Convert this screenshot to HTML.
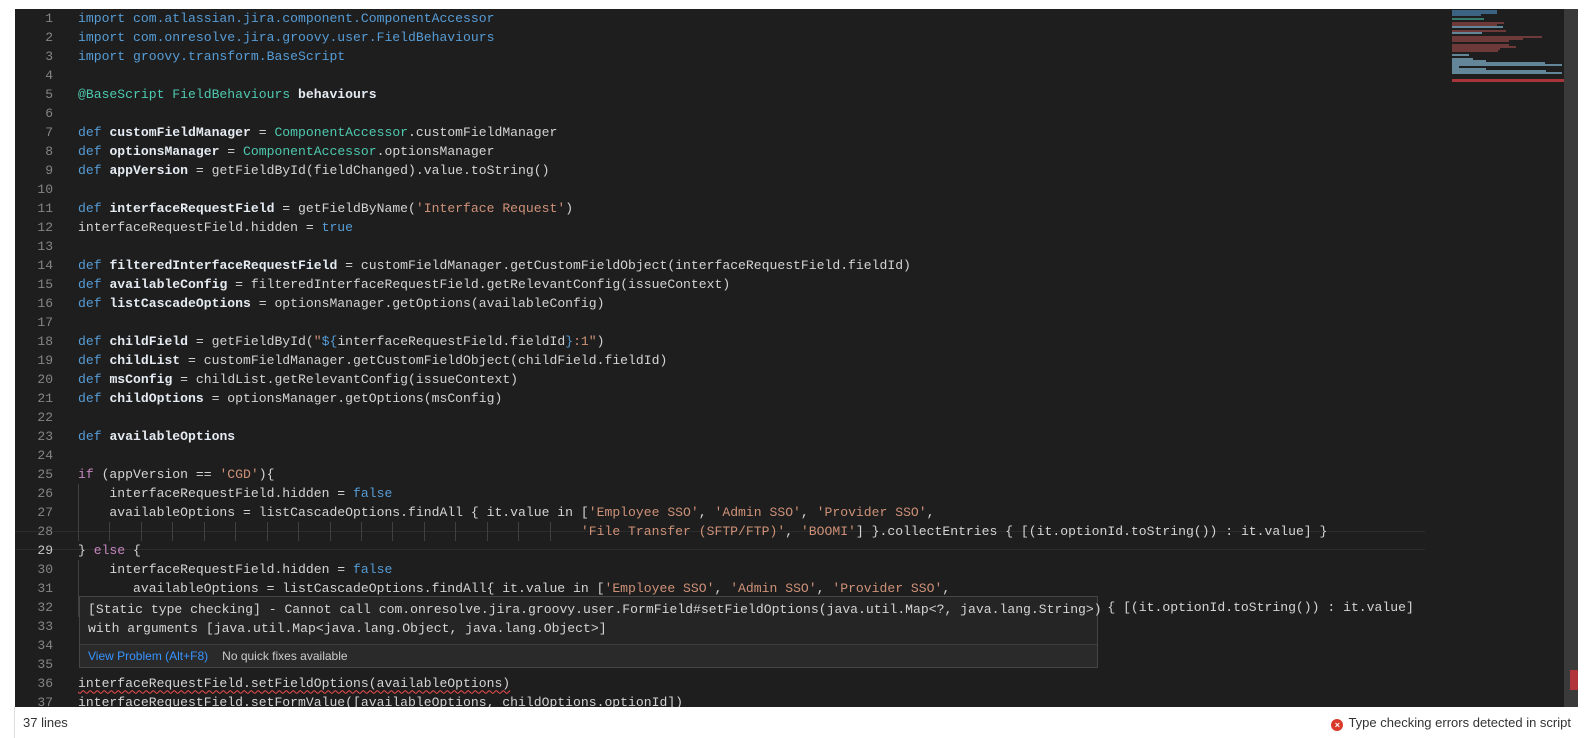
<!DOCTYPE html>
<html><head><meta charset="utf-8"><style>
body{margin:0;width:1590px;height:738px;background:#fff;position:relative;overflow:hidden;font-family:"Liberation Sans",sans-serif}
#ed{position:absolute;left:15px;top:9px;width:1549px;height:698px;background:#1e1e1e;overflow:hidden}
#sb{position:absolute;left:1564px;top:9px;width:14px;height:698px;background:#3a3a3a}
#sbm{position:absolute;left:1570px;top:670px;width:8px;height:20px;background:#b0343a}
.ln{position:absolute;left:0;width:38px;text-align:right;font:13px/19px "Liberation Mono",monospace;color:#858585}
.cd{position:absolute;left:63px;white-space:pre;font:13.1px/19px "Liberation Mono",monospace;color:#d4d4d4}
.k{color:#569cd6}.p{color:#c586c0}.t{color:#4ec9b0}.s{color:#ce9178}.v{color:#e4ebf2;font-weight:bold}
.cur{position:absolute;left:0;width:1410px;top:522px;height:17px;border-top:1px solid #2c2c2c;border-bottom:1px solid #2c2c2c}
.g{position:absolute;width:1px;background:#404040}
#hov{position:absolute;left:79px;top:596px;width:1017px;height:70px;background:#252526;border:1px solid #454545;font:13.1px/19px "Liberation Mono",monospace;color:#d4d4d4}
#hov .m{position:absolute;left:8px;top:3px;white-space:pre}
#hov .st{position:absolute;left:0;right:0;bottom:0;height:22px;border-top:1px solid #3c3c3c;background:#2a2a2b;font:12px/22px "Liberation Sans",sans-serif}
#bar{position:absolute;left:14px;top:707px;width:1564px;height:31px;border-left:1px solid #ddd;background:#fff;font-size:13px;color:#333}
.sq{text-decoration:underline wavy #f14c4c;text-decoration-thickness:1px;text-underline-offset:3px}
.mm{position:absolute;height:2px;opacity:.55}
</style></head><body>
<div id="ed">
<div class="cur"></div>
</div>
<div id="sb"></div><div id="sbm"></div>
<script>
var L=[
'<span class="k">import com.atlassian.jira.component.ComponentAccessor</span>',
'<span class="k">import com.onresolve.jira.groovy.user.FieldBehaviours</span>',
'<span class="k">import groovy.transform.BaseScript</span>',
'',
'<span class="t">@BaseScript FieldBehaviours</span> <span class="v">behaviours</span>',
'',
'<span class="k">def</span> <span class="v">customFieldManager</span> = <span class="t">ComponentAccessor</span>.customFieldManager',
'<span class="k">def</span> <span class="v">optionsManager</span> = <span class="t">ComponentAccessor</span>.optionsManager',
'<span class="k">def</span> <span class="v">appVersion</span> = getFieldById(fieldChanged).value.toString()',
'',
'<span class="k">def</span> <span class="v">interfaceRequestField</span> = getFieldByName(<span class="s">\'Interface Request\'</span>)',
'interfaceRequestField.hidden = <span class="k">true</span>',
'',
'<span class="k">def</span> <span class="v">filteredInterfaceRequestField</span> = customFieldManager.getCustomFieldObject(interfaceRequestField.fieldId)',
'<span class="k">def</span> <span class="v">availableConfig</span> = filteredInterfaceRequestField.getRelevantConfig(issueContext)',
'<span class="k">def</span> <span class="v">listCascadeOptions</span> = optionsManager.getOptions(availableConfig)',
'',
'<span class="k">def</span> <span class="v">childField</span> = getFieldById(<span class="s">"</span><span class="k">${</span>interfaceRequestField.fieldId<span class="k">}</span><span class="s">:1"</span>)',
'<span class="k">def</span> <span class="v">childList</span> = customFieldManager.getCustomFieldObject(childField.fieldId)',
'<span class="k">def</span> <span class="v">msConfig</span> = childList.getRelevantConfig(issueContext)',
'<span class="k">def</span> <span class="v">childOptions</span> = optionsManager.getOptions(msConfig)',
'',
'<span class="k">def</span> <span class="v">availableOptions</span>',
'',
'<span class="p">if</span> (appVersion == <span class="s">\'CGD\'</span>){',
'    interfaceRequestField.hidden = <span class="k">false</span>',
'    availableOptions = listCascadeOptions.findAll { it.value in [<span class="s">\'Employee SSO\'</span>, <span class="s">\'Admin SSO\'</span>, <span class="s">\'Provider SSO\'</span>,',
' '.repeat(64)+'<span class="s">\'File Transfer (SFTP/FTP)\'</span>, <span class="s">\'BOOMI\'</span>] }.collectEntries { [(it.optionId.toString()) : it.value] }',
'} <span class="p">else</span> {',
'    interfaceRequestField.hidden = <span class="k">false</span>',
'       availableOptions = listCascadeOptions.findAll{ it.value in [<span class="s">\'Employee SSO\'</span>, <span class="s">\'Admin SSO\'</span>, <span class="s">\'Provider SSO\'</span>,',
' '.repeat(77)+'<span class="s">\'File Transfer (SFTP/FTP)\'</span>, <span class="s">\'BOOMI\'</span>] }.collectEntries { [(it.optionId.toString()) : it.value]',
'}','','',
'<span class="sq">interfaceRequestField.setFieldOptions(availableOptions)</span>',
'interfaceRequestField.setFormValue([availableOptions, childOptions.optionId])'
];
var ed=document.getElementById('ed'),h='';
for(var i=0;i<L.length;i++){
 var y=i*19-0.5;
 h+='<div class="ln" style="top:'+y+'px;'+(i==28?'color:#c6c6c6':'')+'">'+(i+1)+'</div>';
 h+='<div class="cd" style="top:'+y+'px">'+L[i]+'</div>';
}
function g(line,cols){for(var c=0;c<cols;c++)h+='<div class="g" style="left:'+(63+c*4*7.86)+'px;top:'+(line*19)+'px;height:19px"></div>';}
g(25,1);g(26,1);g(27,16);g(29,1);g(30,1);g(31,19);
var mc=['#569cd6','#569cd6','#569cd6','','#4ec9b0','','#b05050','#b05050','#9cdcfe','','#b05050','#9cdcfe','','#b05050','#b05050','#b05050','','#b05050','#b05050','#b05050','#b05050','','#9cdcfe','','#9cdcfe','#9cdcfe','#9cdcfe','#9cdcfe','#9cdcfe','#9cdcfe','#9cdcfe','#9cdcfe','','','','',''];
for(var i=0;i<37;i++){if(!mc[i])continue;var w=Math.min(110,L[i].replace(/<[^>]+>/g,'').length*0.85);
 h+='<div class="mm" style="left:1437px;top:'+(i*2+1)+'px;width:'+w+'px;background:'+mc[i]+'"></div>';}
h+='<div style="position:absolute;left:1437px;top:70px;width:112px;height:3px;background:#c0393e;opacity:.85"></div>';
ed.innerHTML+=h;
</script>
<div id="hov"><div class="m">[Static type checking] - Cannot call com.onresolve.jira.groovy.user.FormField#setFieldOptions(java.util.Map&lt;?, java.lang.String&gt;)
with arguments [java.util.Map&lt;java.lang.Object, java.lang.Object&gt;]</div>
<div class="st"><span style="color:#3794ff;margin-left:8px">View Problem (Alt+F8)</span><span style="color:#ccc;margin-left:14px">No quick fixes available</span></div></div>
<div id="bar"><span style="position:absolute;left:8px;top:8px">37 lines</span>
<span style="position:absolute;right:8px;top:8px;color:#333"><span style="display:inline-block;width:12px;height:12px;border-radius:50%;background:#d93a2a;color:#fff;font-size:9px;line-height:12px;text-align:center;vertical-align:-1px;margin-right:5px;font-weight:bold">×</span>Type checking errors detected in script</span></div>
</body></html>
